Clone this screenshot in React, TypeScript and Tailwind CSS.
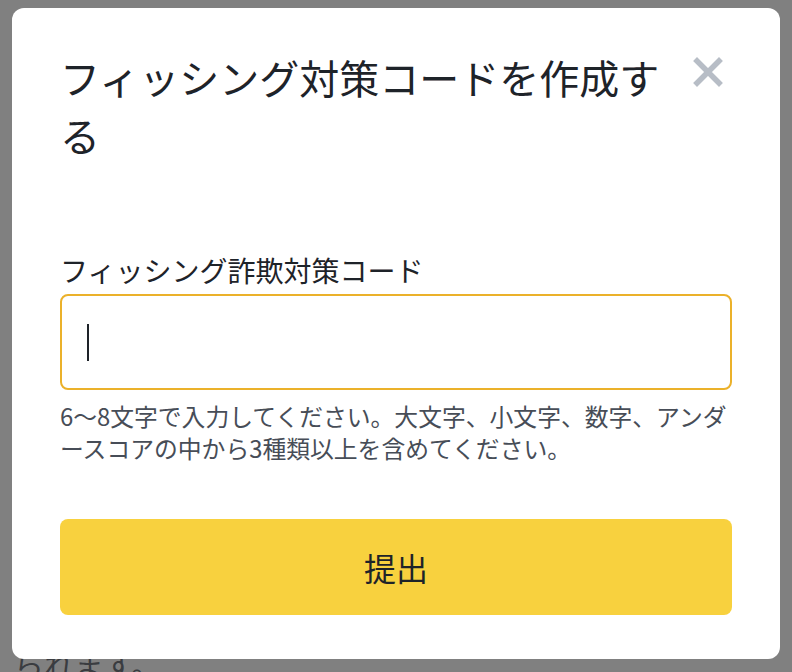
import { useState } from "react";

function CloseIcon() {
  return (
    <svg viewBox="0 0 30 30" className="w-[30px] h-[30px]" fill="none">
      <path d="M4 4 L26 26 M26 4 L4 26" stroke="#b7bdc6" strokeWidth="5.5" strokeLinecap="square" />
    </svg>
  );
}

export default function App() {
  const [code] = useState("");

  return (
    <div
      className="relative w-full h-[672px] overflow-hidden bg-[#808080]"
      style={{ fontFamily: '"Noto Sans CJK JP", "Noto Sans", sans-serif' }}
    >
      {/* page behind the overlay */}
      <div className="pt-[643px] pl-[14px] text-[30px] leading-[40px] text-[#3a3c40]">
        られます。
      </div>

      {/* modal */}
      <div className="absolute inset-0 px-[12px] pt-[8px]">
        <div className="bg-white rounded-[12px] px-[48px] pt-[40px] pb-[44px]">
          <div className="flex items-start">
            <h2 className="flex-1 text-[40px] leading-[58px] text-[#1e2329] font-normal">
              フィッシング対策コードを作成する
            </h2>
            <button className="shrink-0 w-[40px] h-[40px] ml-[24px] mr-[4px] mt-[4px] flex items-center justify-center">
              <CloseIcon />
            </button>
          </div>

          <label className="block mt-[88px] text-[28px] leading-[36px] text-[#1e2329]">
            フィッシング詐欺対策コード
          </label>
          <div className="mt-[6px] h-[96px] border-2 border-[#ebb12a] rounded-[8px] flex items-center pl-[25px]">
            <div className="w-[2px] h-[37px] bg-[#1e2329]" />
            <span className="text-[32px] text-[#1e2329]">{code}</span>
          </div>
          <p className="mt-[10px] text-[23.8px] leading-[32px] text-[#474d57] [line-break:loose]">
            6〜8文字で入力してください。大文字、小文字、数字、アンダースコアの中から3種類以上を含めてください。
          </p>

          <button className="mt-[55px] w-full h-[96px] rounded-[8px] bg-[#f8d13e] text-[32px] text-[#1e2329]">
            提出
          </button>
        </div>
      </div>
    </div>
  );
}
